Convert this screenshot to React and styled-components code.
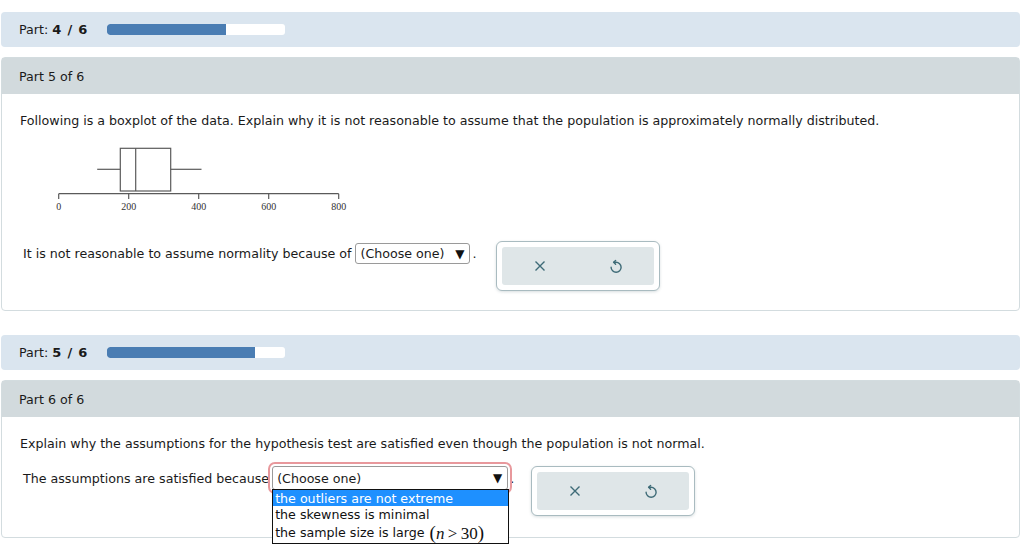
import React from 'react';
import styled, { createGlobalStyle } from 'styled-components';

const GlobalStyle = createGlobalStyle`
  body {
    margin: 0;
    background: #fff;
    font-family: Verdana, "DejaVu Sans", sans-serif;
    font-size: 12.65px;
    color: #1a1a1a;
  }
`;

const Page = styled.div`
  box-sizing: border-box;
  min-height: 100vh;
  padding: 12px 4px 0 1px;
`;

const Progress = styled.div`
  display: flex;
  align-items: center;
  height: 35px;
  padding-left: 18px;
  background: #dae5ef;
  border-radius: 4px;
  margin-bottom: 10px;
`;

const ProgressLabel = styled.span`
  width: 88px;
  b {
    font-weight: bold;
    font-size: 13px;
    letter-spacing: 0.8px;
  }
`;

const Bar = styled.div`
  width: 178px;
  height: 11px;
  border-radius: 3px;
  background: #fff;
  overflow: hidden;
`;

const Fill = styled.div`
  height: 100%;
  background: #4a7db3;
  border-radius: 3px 0 0 3px;
`;

const Panel = styled.section`
  border: 1px solid #d3dcdf;
  border-radius: 4px;
  margin-bottom: ${p => p.$gap || 0}px;
`;

const PanelHeader = styled.div`
  height: 36px;
  display: flex;
  align-items: center;
  padding-left: 17px;
  background: #d2dadd;
`;

const PanelBody = styled.div`
  padding: 19px 18px ${p => p.$bottom}px 18px;
`;

const Prompt = styled.p`
  margin: 0;
  line-height: 16px;
`;

const Plot = styled.svg`
  display: block;
  margin: 11px 0 0 31px;
`;

const AnswerRow = styled.div`
  display: flex;
  align-items: flex-start;
  margin-top: ${p => p.$top}px;
  padding-left: 3px;
`;

const Answer = styled.div`
  position: relative;
  display: flex;
  align-items: center;
  height: ${p => p.$height || 21}px;
  margin-top: 2px;
  white-space: nowrap;
`;

const SelectBox = styled.div`
  position: relative;
  display: flex;
  align-items: center;
  justify-content: space-between;
  box-sizing: border-box;
  width: ${p => p.$width}px;
  height: ${p => p.$height || 21}px;
  margin-left: ${p => p.$left}px;
  padding: 0 5px 0 4px;
  border: 1px solid #9a9a9a;
  border-radius: 3px;
  background: #fff;
  ${p => p.$focus && `
    box-shadow: 0 0 0 2px #fff, 0 0 0 4px #e8989c;
  `}
`;

const Arrow = styled.span`
  font-size: 12px;
  color: #111;
`;

const Period = styled.span`
  margin-left: 2px;
`;

const Options = styled.ul`
  position: absolute;
  left: -1px;
  top: ${p => p.$top}px;
  width: 235px;
  margin: 0;
  padding: 0;
  list-style: none;
  border: 1px solid #111;
  background: #fff;
  z-index: 2;
`;

const Option = styled.li`
  display: flex;
  align-items: center;
  height: ${p => p.$tall ? 21 : 16}px;
  padding-left: 2px;
  background: ${p => p.$active ? '#1e90ff' : '#fff'};
  color: ${p => p.$active ? '#fff' : '#111'};
`;

const Math = styled.span`
  font-family: "Liberation Serif", "Times New Roman", serif;
  font-size: 17px;
  margin-left: 5px;
  i { font-style: italic; }
  .paren { font-size: 19px; }
`;

const Tools = styled.div`
  margin-left: ${p => p.$left}px;
  margin-top: ${p => p.$top || 0}px;
  width: 164px;
  height: 50px;
  box-sizing: border-box;
  padding: 5px;
  border: 1px solid #a9bbc0;
  border-radius: 6px;
  box-shadow: 0 1px 3px rgba(60, 90, 100, 0.2);
  background: #fff;
`;

const ToolsInner = styled.div`
  display: flex;
  height: 100%;
  background: #dfe6e8;
  border-radius: 3px;
`;

const ToolButton = styled.button`
  flex: 1;
  display: flex;
  align-items: center;
  justify-content: center;
  border: 0;
  padding: 0;
  background: transparent;
  cursor: pointer;
`;

const CloseIcon = () => (
  <svg width="14" height="14" viewBox="0 0 14 14">
    <path d="M2.5 2.5 L11.5 11.5 M11.5 2.5 L2.5 11.5" stroke="#3e6b77" strokeWidth="1.4" fill="none" />
  </svg>
);

const UndoIcon = () => (
  <svg width="16" height="16" viewBox="0 0 16 16">
    <path d="M6 4.3 H8 A5 5 0 1 1 3.1 9.3" stroke="#3e6b77" strokeWidth="1.4" fill="none" strokeLinecap="round" />
    <path d="M7.6 2.4 L5.6 4.3 L7.6 6.2" stroke="#3e6b77" strokeWidth="1.4" fill="none" strokeLinecap="round" strokeLinejoin="round" />
  </svg>
);

const ToolBox = ({ left, top }) => (
  <Tools $left={left} $top={top}>
    <ToolsInner>
      <ToolButton aria-label="clear"><CloseIcon /></ToolButton>
      <ToolButton aria-label="undo"><UndoIcon /></ToolButton>
    </ToolsInner>
  </Tools>
);

const ticks = [0, 200, 400, 600, 800];
const x = v => 7.7 + v * 0.35;

const BoxPlot = () => (
  <Plot width="300" height="75" viewBox="0 0 300 75">
    <g stroke="#5a5a5a" strokeWidth="1.2" fill="none">
      <line x1={x(0)} y1="53.7" x2={x(800)} y2="53.7" />
      {ticks.map(t => <line key={t} x1={x(t)} y1="53.7" x2={x(t)} y2="59" />)}
      <rect x={x(176)} y="8.3" width={x(320) - x(176)} height="42.7" />
      <line x1={x(220)} y1="8.3" x2={x(220)} y2="51" />
      <line x1={x(110)} y1="29.3" x2={x(176)} y2="29.3" />
      <line x1={x(320)} y1="29.3" x2={x(408)} y2="29.3" />
    </g>
    {ticks.map(t => (
      <text key={t} x={x(t)} y="70" textAnchor="middle" fontSize="10" fill="#333"
        fontFamily="'Liberation Serif', 'Times New Roman', serif">{t}</text>
    ))}
  </Plot>
);

const ProgressBar = ({ part, total }) => (
  <Progress>
    <ProgressLabel>Part: <b>{part} / {total}</b></ProgressLabel>
    <Bar><Fill style={{ width: `${(part / total) * 100}%` }} /></Bar>
  </Progress>
);

export default function App() {
  return (
    <Page>
      <GlobalStyle />
      <ProgressBar part={4} total={6} />
      <Panel $gap={24}>
        <PanelHeader>Part 5 of 6</PanelHeader>
        <PanelBody $bottom={19}>
          <Prompt>Following is a boxplot of the data. Explain why it is not reasonable to assume that the population is approximately normally distributed.</Prompt>
          <BoxPlot />
          <AnswerRow $top={26}>
            <Answer>
              It is not reasonable to assume normality because of
              <SelectBox $width={115} $left={4}>
                (Choose one) <Arrow>▼</Arrow>
              </SelectBox>
              <Period>.</Period>
            </Answer>
            <ToolBox left={19} />
          </AnswerRow>
        </PanelBody>
      </Panel>
      <ProgressBar part={5} total={6} />
      <Panel>
        <PanelHeader>Part 6 of 6</PanelHeader>
        <PanelBody $bottom={21}>
          <Prompt>Explain why the assumptions for the hypothesis test are satisfied even though the population is not normal.</Prompt>
          <AnswerRow $top={12}>
            <Answer $height={24}>
              The assumptions are satisfied because
              <SelectBox $width={236} $left={3} $height={24} $focus>
                (Choose one) <Arrow>▼</Arrow>
                <Options $top={22}>
                  <Option $active>the outliers are not extreme</Option>
                  <Option>the skewness is minimal</Option>
                  <Option $tall>
                    the sample size is large
                    <Math><span className="paren">(</span><i>n</i>&thinsp;&gt;&thinsp;30<span className="paren">)</span></Math>
                  </Option>
                </Options>
              </SelectBox>
              <Period>.</Period>
            </Answer>
            <ToolBox left={17} top={2} />
          </AnswerRow>
        </PanelBody>
      </Panel>
    </Page>
  );
}
